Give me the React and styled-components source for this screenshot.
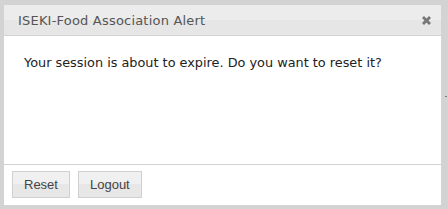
import React from "react";
import styled, { createGlobalStyle } from "styled-components";

const Global = createGlobalStyle`
  html, body { margin: 0; padding: 0; }
  body {
    background: #d3d3d3;
    width: 447px;
    height: 209px;
    overflow: hidden;
    font-family: "DejaVu Sans", Verdana, sans-serif;
  }
`;

const Page = styled.div`
  position: relative;
  width: 447px;
  height: 209px;
  padding: 5px 6px 4px 4px;
  box-sizing: border-box;
`;

const Dialog = styled.div`
  display: flex;
  flex-direction: column;
  width: 437px;
  height: 200px;
  background: #fff;
`;

const Header = styled.div`
  display: flex;
  align-items: center;
  justify-content: space-between;
  height: 30px;
  padding: 0 10px 0 14px;
  border-bottom: 1px solid #d3d3d3;
  background: linear-gradient(#ececec 50%, #e6e6e6 50%);
  box-sizing: content-box;
`;

const Title = styled.span`
  font-size: 13px;
  letter-spacing: 0.2px;
  color: #555;
  font-family: "DejaVu Sans", Verdana, sans-serif;
`;

const Close = styled.svg`
  width: 9px;
  height: 9px;
  margin-top: 1px;
`;

const Body = styled.div`
  flex: 1;
  padding: 19px 20px 0 20px;
  font-size: 12.85px;
  color: #222;
  line-height: 16px;
`;

const Footer = styled.div`
  display: flex;
  gap: 8px;
  padding: 6px 8px 7px 8px;
  border-top: 1px solid #d3d3d3;
`;

const Button = styled.button`
  height: 27px;
  padding: 0 11px;
  border: 1px solid #d0d0d0;
  background: linear-gradient(#f0f0f0 50%, #e7e7e7 50%);
  color: #444;
  font-family: "Liberation Sans", Arial, sans-serif;
  font-size: 13px;
  cursor: pointer;
`;

const Tick = styled.span`
  position: absolute;
  left: 445px;
  top: 96px;
  width: 2px;
  height: 1px;
  background: #7a7a7a;
`;

export default function App() {
  return (
    <>
      <Global />
      <Page>
        <Dialog>
          <Header>
            <Title>ISEKI-Food Association Alert</Title>
            <Close viewBox="0 0 9 9">
              <path
                d="M0 2 L2 0 L4.5 2.5 L7 0 L9 2 L6.5 4.5 L9 7 L7 9 L4.5 6.5 L2 9 L0 7 L2.5 4.5 Z"
                fill="#777"
              />
            </Close>
          </Header>
          <Body>Your session is about to expire. Do you want to reset it?</Body>
          <Footer>
            <Button>Reset</Button>
            <Button>Logout</Button>
          </Footer>
        </Dialog>
        <Tick />
      </Page>
    </>
  );
}
